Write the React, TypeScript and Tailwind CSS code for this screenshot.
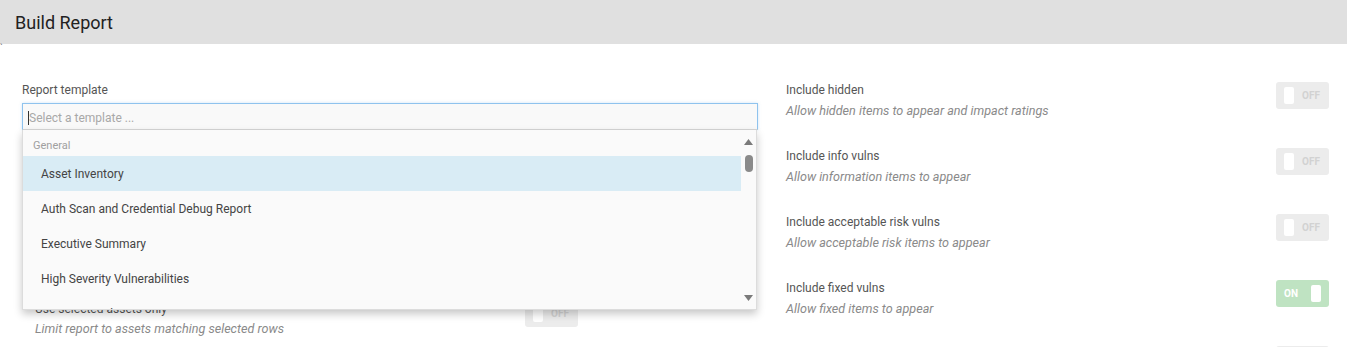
import React from "react";

function Toggle({ on = false }: { on?: boolean }) {
  return on ? (
    <div className="relative flex h-[27px] w-[53px] shrink-0 items-center justify-between rounded-[3px] bg-[#bfe3c2] pl-[8px] pr-[8px]">
      <span className="text-[10px] font-bold leading-none text-white">ON</span>
      <span className="h-[17px] w-[10px] rounded-[2px] bg-white" />
    </div>
  ) : (
    <div className="relative flex h-[27px] w-[53px] shrink-0 items-center rounded-[3px] bg-[#ececec] pl-[8px]">
      <span className="h-[17px] w-[10px] rounded-[2px] bg-white" />
      <span className="ml-[8px] text-[10px] font-bold leading-none text-[#d2d2d2]">OFF</span>
    </div>
  );
}

function OptionRow({ label, desc, on = false }: { label: string; desc: string; on?: boolean }) {
  return (
    <div className="flex h-[66px] items-start justify-between">
      <div className="pt-[1px]">
        <div className="text-[12px] leading-[14px] text-[#555]">{label}</div>
        <div className="mt-[7px] text-[12.6px] italic leading-[14px] text-[#8a8a8a]">{desc}</div>
      </div>
      <Toggle on={on} />
    </div>
  );
}

const items = [
  "Asset Inventory",
  "Auth Scan and Credential Debug Report",
  "Executive Summary",
  "High Severity Vulnerabilities",
  "Missing Patches",
];

export default function App() {
  return (
    <div className="h-[347px] w-[1347px] overflow-hidden bg-white" style={{ fontFamily: "Roboto, 'Noto Sans', sans-serif" }}>
      <div className="flex h-[44px] items-center bg-[#e0e0e0] pl-[15px]">
        <h1 className="text-[18px] font-normal text-[#222]">Build Report</h1>
      </div>
      <div className="h-0 text-[9px] leading-[8px] text-[#666]">`</div>
      <div className="flex pl-[22px] pr-[18px] pt-[38px]">
        <div className="w-[736px]">
          <div className="relative">
            <div className="mt-[1px] text-[12px] leading-[14px] text-[#555]">Report template</div>
            <div className="relative mt-[6px]">
              <div className="flex h-[27px] items-center border border-[#8fc3ee] border-b-[#d6d6d6] bg-[#f9f9f9] pl-[5px] pt-[2px] shadow-[0_0_3px_rgba(120,180,235,0.35)]">
                <span className="h-[14px] w-px bg-[#333]" />
                <span className="text-[12px] text-[#a8a8a8]">Select a template ...</span>
              </div>
              <div className="absolute left-0 top-[27px] z-10 flex h-[180px] w-[735px] border-x border-b border-[#dcdcdc] bg-[#fafafa] shadow-[0_4px_8px_rgba(0,0,0,0.22)]">
                <div className="flex-1 overflow-hidden">
                  <div className="flex h-[26px] items-center pl-[10px] pt-[6px] text-[11px] text-[#a0a0a0]">General</div>
                  {items.map((it, i) => (
                    <div
                      key={it}
                      className={`flex h-[35px] items-center pl-[18px] text-[12px] text-[#444] ${i === 0 ? "bg-[#d9ecf5]" : ""}`}
                    >
                      {it}
                    </div>
                  ))}
                </div>
                <div className="relative flex w-[15px] flex-col items-center bg-[#fafafa]">
                  <svg className="mt-[9px]" width="9" height="6" viewBox="0 0 9 6">
                    <path d="M0 6 L4.5 0 L9 6 Z" fill="#7a7a7a" />
                  </svg>
                  <div className="mt-[10px] h-[17px] w-[8px] rounded-[4px] bg-[#8a8a8a]" />
                  <div className="flex-1" />
                  <svg className="mb-[8px]" width="9" height="6" viewBox="0 0 9 6">
                    <path d="M0 0 L9 0 L4.5 6 Z" fill="#7a7a7a" />
                  </svg>
                </div>
              </div>
            </div>
          </div>
          <div className="mt-[170px] w-[556px] pl-[13px]">
            <div className="flex h-[66px] items-start justify-between">
              <div className="pt-[2px]">
                <div className="text-[12px] leading-[14px] text-[#555]">Use selected assets only</div>
                <div className="mt-[6px] text-[12.6px] italic leading-[14px] text-[#8a8a8a]">Limit report to assets matching selected rows</div>
              </div>
              <Toggle />
            </div>
          </div>
        </div>
        <div className="ml-[28px] flex-1">
          <OptionRow label="Include hidden" desc="Allow hidden items to appear and impact ratings" />
          <OptionRow label="Include info vulns" desc="Allow information items to appear" />
          <OptionRow label="Include acceptable risk vulns" desc="Allow acceptable risk items to appear" />
          <OptionRow label="Include fixed vulns" desc="Allow fixed items to appear" on />
          <OptionRow label="Include superseded vulns" desc="Allow superseded items to appear" />
        </div>
      </div>
    </div>
  );
}
